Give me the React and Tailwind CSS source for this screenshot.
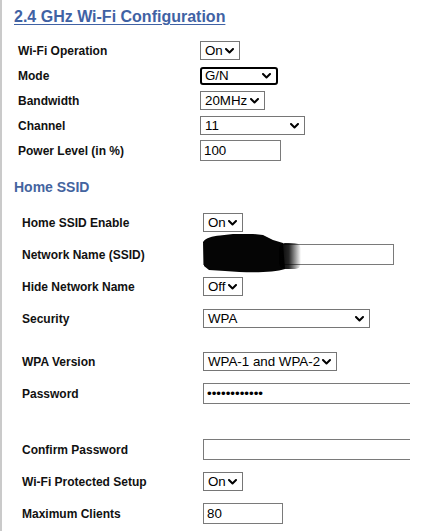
import React from "react";

const font = { fontFamily: '"Liberation Sans", Arial, sans-serif' };

function Chevron(){
  return (
    <svg width="9" height="6" viewBox="0 0 9 6" className="absolute right-[5px] top-1/2 -translate-y-1/2 pointer-events-none">
      <polyline points="1,1 4.5,4.5 8,1" fill="none" stroke="#000" strokeWidth="2" strokeLinecap="round" strokeLinejoin="round"/>
    </svg>
  );
}

function Select({ value, w, focus }){
  return (
    <div className={`relative flex items-center bg-white text-[13.33px] leading-none text-black ${focus ? "border-2 border-black rounded-[3px] h-[18px] pl-[3px]" : "border border-[#767676] h-[19px] pl-[4px]"}`} style={{ width: w }}>
      <span className="pt-px">{value}</span>
      <Chevron/>
    </div>
  );
}

function Input({ value, w, type = "text", noRight }){
  return (
    <input readOnly type={type} value={value}
      className={`h-[21px] border border-[#7a7a7a] bg-white px-[3px] text-[13.33px] text-black outline-none ${noRight ? "border-r-0" : ""}`}
      style={{ width: w, ...font }}/>
  );
}

function Row({ label, h, className = "", col, children }){
  return (
    <div className={`grid items-center ${h} ${className}`} style={{ gridTemplateColumns: col }}>
      <div className="text-[12px] font-bold text-[#111]">{label}</div>
      <div className="relative flex items-center">{children}</div>
    </div>
  );
}

// redaction blot over the SSID value
function Scribble(){
  return (
    <svg width="100" height="42" viewBox="0 0 100 42" className="absolute left-0 -top-[12px] pointer-events-none">
      <defs>
        <linearGradient id="fade" x1="0" x2="1" y1="0" y2="0">
          <stop offset="0" stopColor="#000" stopOpacity="1"/>
          <stop offset="0.45" stopColor="#000" stopOpacity="0.85"/>
          <stop offset="1" stopColor="#000" stopOpacity="0"/>
        </linearGradient>
      </defs>
      <path d="M0 10 C3 6 9 4 17 3.5 L30 2 L50 2 L60 3 L70 8 L80 11 L82 37 C70 41 45 41 22 39 L6 38 L1 34 Z" fill="#050505"/>
      <rect x="76" y="11" width="22" height="26" rx="6" fill="url(#fade)"/>
    </svg>
  );
}

export default function App(){
  const c1 = "182px 1fr";
  const c2 = "181px 1fr";
  return (
    <div className="min-h-[531px] w-[422px] bg-white border-l-2 border-[#cacaca] overflow-hidden" style={font}>
      <div className="pl-[12px] pt-[8px]">
        <h1 className="text-[16px] font-bold leading-[18px] text-[#4062a4] underline underline-offset-[2px] decoration-1">2.4 GHz Wi-Fi Configuration</h1>
      </div>

      <div className="mt-[12px] pl-[16px]">
        <Row label="Wi-Fi Operation" h="h-[25px]" col={c1}><Select value="On" w={40}/></Row>
        <Row label="Mode" h="h-[25px]" col={c1}><Select value="G/N" w={78} focus/></Row>
        <Row label="Bandwidth" h="h-[25px]" col={c1}><Select value="20MHz" w={65}/></Row>
        <Row label="Channel" h="h-[25px]" col={c1}><Select value="11" w={105}/></Row>
        <Row label="Power Level (in %)" h="h-[25px]" col={c1}><Input value="100" w={81}/></Row>
      </div>

      <h2 className="mt-[16px] pl-[12px] text-[14px] font-bold leading-[16px] text-[#44649f]">Home SSID</h2>

      <div className="mt-[11.5px] pl-[20px]">
        <Row label="Home SSID Enable" h="h-8" col={c2}><Select value="On" w={40}/></Row>
        <Row label="Network Name (SSID)" h="h-8" col={c2}>
          <Input value="" w={191}/>
          <Scribble/>
        </Row>
        <Row label="Hide Network Name" h="h-8" col={c2}><Select value="Off" w={40}/></Row>
        <Row label="Security" h="h-8" col={c2}><Select value="WPA" w={167}/></Row>
        <Row label="WPA Version" h="h-8" className="mt-[11px]" col={c2}><Select value="WPA-1 and WPA-2" w={134}/></Row>
        <Row label="Password" h="h-8" col={c2}><Input type="password" value="xxxxxxxxxxxx" w={207} noRight/></Row>
        <Row label="Confirm Password" h="h-8" className="mt-[24px]" col={c2}><Input value="" w={207} noRight/></Row>
        <Row label="Wi-Fi Protected Setup" h="h-8" col={c2}><Select value="On" w={40}/></Row>
        <Row label="Maximum Clients" h="h-8" col={c2}><Input value="80" w={80}/></Row>
      </div>
    </div>
  );
}
